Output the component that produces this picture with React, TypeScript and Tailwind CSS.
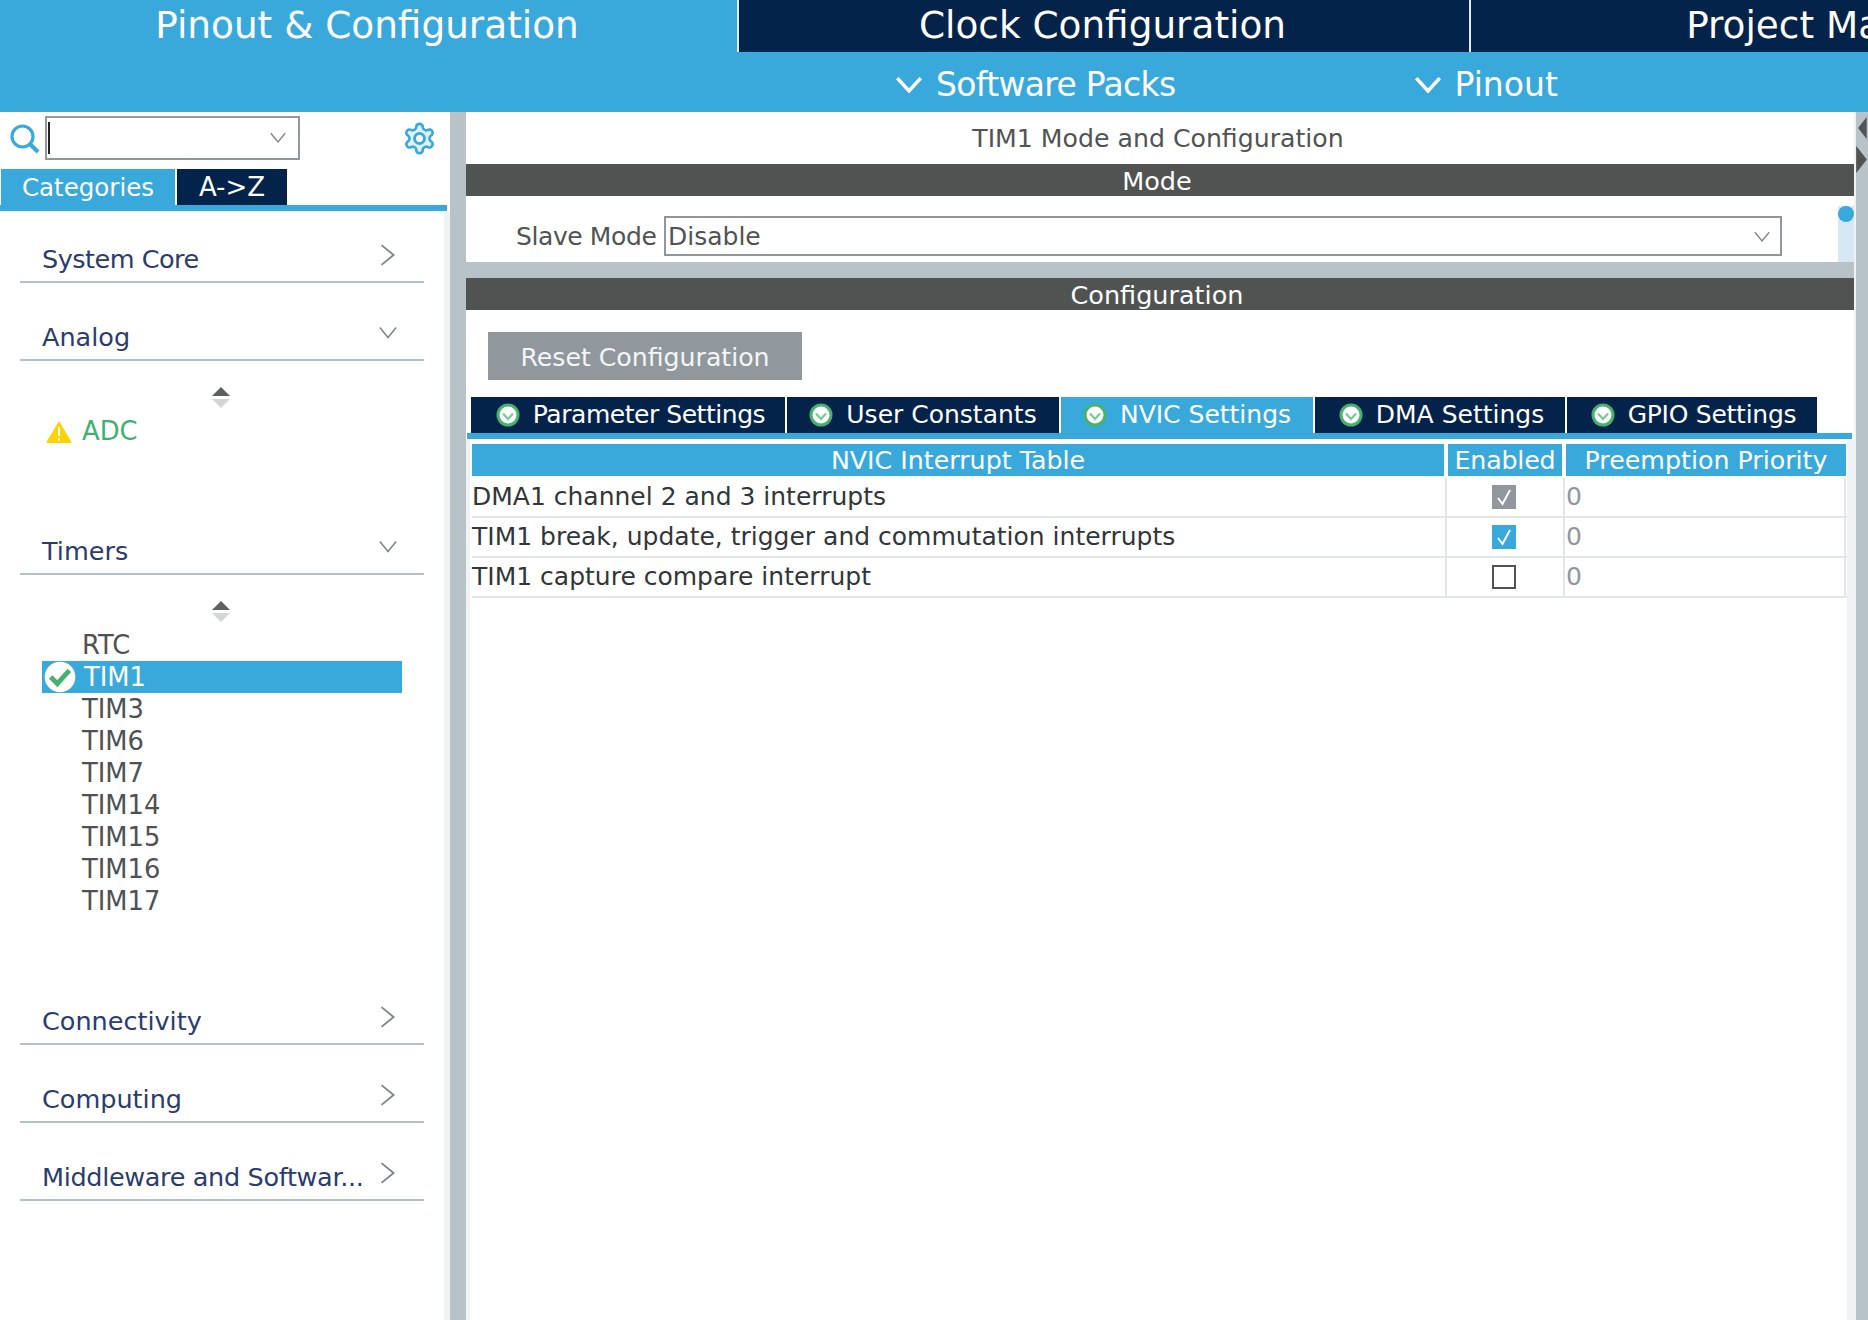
import { ReactNode } from "react";

const font = "font-['DejaVu_Sans',sans-serif]";

const Chevron = ({ dir, className }: { dir: "down" | "right"; className: string }) => (
  <svg viewBox="0 0 20 20" className={className} fill="none" stroke="currentColor" strokeWidth="1.7">
    {dir === "down" ? <polyline points="1,4 10,15 19,4" /> : <polyline points="5,1 16,10 5,19" />}
  </svg>
);

const TopTab = ({ label, width, active, inset }: { label: string; width: string; active?: boolean; inset: string }) => (
  <div
    className={`h-[52px] shrink-0 flex items-center justify-center pb-[2px] text-[37.4px] text-white border-r-2 border-[#e6e9ec] ${width} ${inset} ${
      active ? "bg-[#39a9dc]" : "bg-[#03234b]"
    }`}
  >
    {label}
  </div>
);

const SubMenu = ({ label, className }: { label: string; className: string }) => (
  <div className={`flex items-center gap-[13px] text-[33px] text-white ${className}`}>
    <svg viewBox="0 0 26 16" className="w-[28px] h-[17px]" fill="none" stroke="currentColor" strokeWidth="3.4">
      <polyline points="2,2 13,14 24,2" />
    </svg>
    {label}
  </div>
);

const SideHeader = ({ label, open, first, tracking }: { label: string; open?: boolean; first?: boolean; tracking?: string }) => (
  <div
    className={`h-[41px] flex items-start justify-between border-b-2 border-[#b4c1cc] mx-[20px] pl-[22px] text-[25.5px] text-[#2b3c6d] ${
      first ? "mt-[31px]" : "mt-[37px]"
    }`}
  >
    <span className={`leading-[34px] ${tracking ?? ""}`}>{label}</span>
    {open ? (
      <Chevron dir="down" className="w-[22px] h-[18px] mr-[25px] mt-[4px] text-[#7f858a]" />
    ) : (
      <Chevron dir="right" className="w-[22px] h-[22px] mr-[26px] mt-[2px] text-[#7f858a]" />
    )}
  </div>
);

const SortArrows = ({ className }: { className: string }) => (
  <div className={`flex justify-center w-[402px] mx-[20px] ${className}`}>
    <svg viewBox="0 0 18 21" className="w-[18px] h-[21px]">
      <polygon points="9,0 18,9 0,9" fill="#5d6063" />
      <polygon points="0,12 18,12 9,21" fill="#d3d6d8" />
    </svg>
  </div>
);

const CheckBadge = ({ size, ring, tick, points, weight }: { size: string; ring: string; tick: string; points: string; weight: string }) => (
  <svg viewBox="0 0 24 24" className={size}>
    <circle cx="12" cy="12" r="11.5" fill={ring} />
    <circle cx="12" cy="12" r="8.5" fill="#fff" />
    <polyline points={points} fill="none" stroke={tick} strokeWidth={weight} />
  </svg>
);

const timers = ["TIM3", "TIM6", "TIM7", "TIM14", "TIM15", "TIM16", "TIM17"];

const Sidebar = () => (
  <div className="w-[444px] shrink-0 flex flex-col">
    <div className="h-[57px] flex items-start">
      <svg viewBox="0 0 30 30" className="w-[30px] h-[30px] ml-[10px] mt-[12px]" fill="none" stroke="#39a9dc">
        <circle cx="12.5" cy="12.5" r="10.5" strokeWidth="3.2" />
        <line x1="20" y1="20" x2="28" y2="28" strokeWidth="4" />
      </svg>
      <div className="ml-[5px] mt-[4px] w-[255px] h-[44px] border-2 border-[#90989e] flex items-center justify-between pr-[10px]">
        <div className="w-[2px] h-[32px] ml-[1px] bg-[#222]" />
        <Chevron dir="down" className="w-[20px] h-[16px] text-[#7f858a]" />
      </div>
      <svg viewBox="0 0 24 24" className="w-[35px] h-[35px] ml-[102px] mt-[9px]" fill="#dff0f9" stroke="#39a9dc" strokeWidth="1.8">
        <path d="M12.22 2h-.44a2 2 0 0 0-2 2v.18a2 2 0 0 1-1 1.73l-.43.25a2 2 0 0 1-2 0l-.15-.08a2 2 0 0 0-2.73.73l-.22.38a2 2 0 0 0 .73 2.73l.15.1a2 2 0 0 1 1 1.72v.51a2 2 0 0 1-1 1.74l-.15.09a2 2 0 0 0-.73 2.73l.22.38a2 2 0 0 0 2.73.73l.15-.08a2 2 0 0 1 2 0l.43.25a2 2 0 0 1 1 1.73V20a2 2 0 0 0 2 2h.44a2 2 0 0 0 2-2v-.18a2 2 0 0 1 1-1.73l.43-.25a2 2 0 0 1 2 0l.15.08a2 2 0 0 0 2.73-.73l.22-.39a2 2 0 0 0-.73-2.73l-.15-.08a2 2 0 0 1-1-1.74v-.5a2 2 0 0 1 1-1.74l.15-.09a2 2 0 0 0 .73-2.73l-.22-.38a2 2 0 0 0-2.73-.73l-.15.08a2 2 0 0 1-2 0l-.43-.25a2 2 0 0 1-1-1.73V4a2 2 0 0 0-2-2z" />
        <circle cx="12" cy="12" r="3.4" fill="#fff" strokeWidth="2" />
      </svg>
    </div>

    <div className="flex h-[36px] pl-[1px] gap-[2px] text-[24.5px] text-white">
      <div className="w-[174px] bg-[#39a9dc] flex items-center justify-center pt-[2px]">Categories</div>
      <div className="w-[110px] bg-[#03234b] flex items-center justify-center pt-[1px] text-[26px]">A-&gt;Z</div>
    </div>
    <div className="h-[6px] w-[447px] bg-[#39a9dc] shrink-0" />

    <SideHeader label="System Core" first tracking="tracking-[-0.5px]" />
    <SideHeader label="Analog" open />
    <SortArrows className="mt-[26px]" />
    <div className="flex items-center ml-[46px] mt-[11px] h-[24px] text-[25.8px] text-[#3fb16f]">
      <svg viewBox="0 0 26 23" className="w-[26px] h-[23px]">
        <path d="M13 1 L25.5 22 Q26 23 24.5 23 L1.5 23 Q0 23 0.5 22 Z" fill="#ffd200" />
        <rect x="12" y="7" width="2" height="9" fill="#fff" />
        <rect x="12" y="18" width="2" height="2.5" fill="#fff" />
      </svg>
      <span className="ml-[10px]">ADC</span>
    </div>
    <div className="h-[54px] shrink-0" />
    <SideHeader label="Timers" open />
    <SortArrows className="mt-[26px]" />
    <div className="mt-[7px] ml-[42px] w-[360px] text-[25.8px] text-[#4f5254] flex flex-col">
      <div className="h-[32px] leading-[32px] pl-[40px]">RTC</div>
      <div className="h-[32px] leading-[32px] bg-[#39a9dc] text-white flex items-center">
        <CheckBadge size="w-[32px] h-[32px] ml-[2px]" ring="#ffffff" tick="#49b170" points="5,12 10,17 19,7" weight="3.6" />
        <span className="ml-[8px]">TIM1</span>
      </div>
      {timers.map((t) => (
        <div key={t} className="h-[32px] leading-[32px] pl-[40px]">
          {t}
        </div>
      ))}
    </div>
    <div className="h-[50px] shrink-0" />
    <SideHeader label="Connectivity" />
    <SideHeader label="Computing" />
    <SideHeader label="Middleware and Softwar..." tracking="tracking-[-0.33px]" />
  </div>
);

const Bar = ({ label }: { label: string }) => (
  <div className="h-[32px] bg-[#515352] text-white text-[25.5px] flex items-center justify-center pt-[2px] pr-[6px] shrink-0">{label}</div>
);

const ConfigTab = ({ label, width, active, tracking, inset }: { label: string; width: string; active?: boolean; tracking?: string; inset?: string }) => (
  <div className={`h-[36px] flex items-center justify-center gap-[13px] text-white text-[25px] ${width} ${inset ?? ""} ${active ? "bg-[#39a9dc]" : "bg-[#03234b]"}`}>
    <CheckBadge size="w-[24px] h-[24px]" ring="#49b170" tick="#7ccb9c" points="7,10.5 12,16 17,10.5" weight="2.4" />
    <span className={tracking ?? ""}>{label}</span>
  </div>
);

const Row = ({ label, children }: { label: string; children: ReactNode }) => (
  <div className="flex h-[40px] border-b-2 border-[#e3e6e9] text-[25px] shrink-0">
    <div className="w-[973px] text-[#333638] leading-[38px] whitespace-nowrap">{label}</div>
    <div className="w-[118px] border-l-2 border-[#e3e6e9] flex items-center justify-center pr-[2px]">{children}</div>
    <div className="w-[283px] border-l-2 border-r-2 border-[#e3e6e9] pl-[1px] text-[#90989e] leading-[38px]">0</div>
  </div>
);

const Tick = () => (
  <svg viewBox="0 0 24 24" className="w-[24px] h-[24px]" fill="none" stroke="#fff" strokeWidth="2">
    <polyline points="6,13 10.5,19 18,5" />
  </svg>
);

const Main = () => (
  <div className="flex-1 flex flex-col min-w-0">
    <div className="h-[52px] flex items-center justify-center text-[25.2px] text-[#515354] shrink-0 pt-[2px] pr-[4px]">
      TIM1 Mode and Configuration
    </div>
    <Bar label="Mode" />
    <div className="h-[66px] flex items-start shrink-0">
      <span className="ml-[50px] w-[148px] mt-[20px] leading-[42px] text-[25px] tracking-[-0.4px] text-[#515354] whitespace-nowrap">Slave Mode</span>
      <div className="mt-[20px] w-[1118px] h-[40px] border-2 border-[#90989e] flex items-center justify-between pl-[2px] pr-[8px] pt-[2px] text-[25px] text-[#515354]">
        Disable
        <Chevron dir="down" className="w-[20px] h-[16px] text-[#7f858a]" />
      </div>
      <div className="ml-[56px] w-[16px] self-stretch mt-[10px] bg-[#d8e7f4]">
        <div className="w-[16px] h-[16px] rounded-full bg-[#39a9dc]" />
      </div>
    </div>
    <div className="h-[16px] bg-[#b7c2c9] shrink-0" />
    <Bar label="Configuration" />

    <div className="h-[87px] pl-[22px] pt-[22px] shrink-0">
      <div className="w-[314px] h-[48px] bg-[#90989e] text-white/90 text-[25.2px] flex items-center justify-center pt-[3px]">Reset Configuration</div>
    </div>

    <div className="flex gap-[2px] pl-[5px] shrink-0">
      <ConfigTab label="Parameter Settings" width="w-[314px]" tracking="tracking-[-0.46px]" inset="pl-[5px]" />
      <ConfigTab label="User Constants" width="w-[272px]" />
      <ConfigTab label="NVIC Settings" width="w-[252px]" active />
      <ConfigTab label="DMA Settings" width="w-[250px]" inset="pl-[3px]" />
      <ConfigTab label="GPIO Settings" width="w-[250px]" tracking="tracking-[-0.25px]" inset="pl-[3px]" />
    </div>
    <div className="h-[6px] w-[1385px] ml-[1px] bg-[#39a9dc] shrink-0" />

    <div className="flex-1 border-l-4 border-r-[7px] border-[#f0f2f4] pt-[5px] pl-[2px]">
      <div className="flex gap-[4px] h-[32px] text-white text-[25.3px]">
        <div className="w-[972px] bg-[#39a9dc] flex items-center justify-center pt-[2px]">NVIC Interrupt Table</div>
        <div className="w-[114px] bg-[#39a9dc] flex items-center justify-center pt-[2px] tracking-[-0.2px]">Enabled</div>
        <div className="w-[280px] bg-[#39a9dc] flex items-center justify-center pt-[2px]">Preemption Priority</div>
      </div>
      <div className="mt-[2px] flex flex-col">
        <Row label="DMA1 channel 2 and 3 interrupts">
          <div className="w-[24px] h-[24px] bg-[#90989e]">
            <Tick />
          </div>
        </Row>
        <Row label="TIM1 break, update, trigger and commutation interrupts">
          <div className="w-[24px] h-[24px] bg-[#39a9dc]">
            <Tick />
          </div>
        </Row>
        <Row label="TIM1 capture compare interrupt">
          <div className="w-[24px] h-[24px] border-2 border-[#515354]" />
        </Row>
      </div>
    </div>
  </div>
);

export default function App() {
  return (
    <div className={`w-[1868px] h-[1320px] overflow-hidden bg-white flex flex-col ${font}`}>
      <div className="flex shrink-0 whitespace-nowrap">
        <TopTab label="Pinout & Configuration" width="w-[739px]" inset="pr-[3px]" active />
        <TopTab label="Clock Configuration" width="w-[732px]" inset="pr-[3px]" />
        <TopTab label="Project Manager" width="w-[731px]" inset="pl-[5px]" />
      </div>
      <div className="h-[60px] bg-[#39a9dc] flex items-center pt-[5px] shrink-0">
        <div className="ml-[895px] tracking-[-0.68px]">
          <SubMenu label="Software Packs" className="" />
        </div>
        <SubMenu label="Pinout" className="ml-[238px] text-[33.5px]" />
      </div>
      <div className="flex-1 flex min-h-0">
        <Sidebar />
        <div className="w-[6px] mt-[99px] bg-[#f0f2f4] shrink-0" />
        <div className="w-[16px] bg-[#b7c2c9] shrink-0" />
        <Main />
        <div className="w-[2px] bg-[#f0f2f4] shrink-0" />
        <div className="w-[12px] bg-[#b7c2c9] shrink-0 pt-[5px] flex flex-col gap-[7px]">
          <svg viewBox="0 0 12 28" className="w-[12px] h-[22px]">
            <polygon points="12,0 12,28 1,14" fill="#515352" />
          </svg>
          <svg viewBox="0 0 12 28" className="w-[12px] h-[27px]">
            <polygon points="0,0 0,28 11,14" fill="#515352" />
          </svg>
        </div>
      </div>
    </div>
  );
}
